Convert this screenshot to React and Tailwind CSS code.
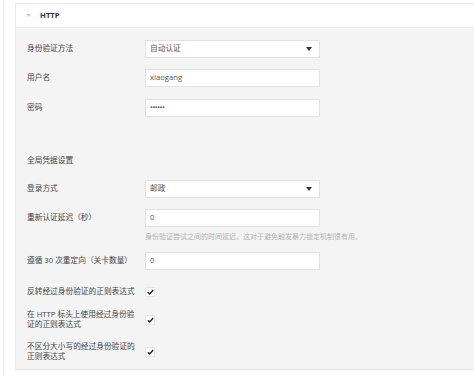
import React from 'react'

const font = { fontFamily: '"Open Sans", "Noto Sans CJK SC", sans-serif' }

function Caret() {
  return (
    <svg width="6" height="4" viewBox="0 0 6 4" className="shrink-0">
      <path d="M0 0 L6 0 L3 4 Z" fill="#333" />
    </svg>
  )
}

function Select({ value }) {
  return (
    <div className="flex h-[18px] w-[175px] items-center justify-between border border-[#e2e2e2] bg-white pl-[4px] pr-[7px] text-[7.7px] text-[#555]">
      <span>{value}</span>
      <Caret />
    </div>
  )
}

function Input({ value }) {
  return (
    <div className="flex h-[18px] w-[175px] items-center border border-[#e2e2e2] bg-white pl-[4px] text-[7.7px] text-[#555]">
      {value}
    </div>
  )
}

function Check() {
  return (
    <div className="flex h-[10px] w-[10px] items-center justify-center border border-[#e6e6e6] bg-white">
      <svg width="7" height="6" viewBox="0 0 7 6">
        <path d="M0.8 3.2 L2.6 4.9 L6.2 1" fill="none" stroke="#222" strokeWidth="1.4" />
      </svg>
    </div>
  )
}

function Row({ label, children, className = '' }) {
  return (
    <div className={`flex items-center ${className}`}>
      <div className="w-[118px] shrink-0 text-[7.7px] leading-[9.5px] text-[#444]">{label}</div>
      {children}
    </div>
  )
}

export default function App() {
  return (
    <div className="flex h-[380px] w-[474px] overflow-hidden bg-white" style={font}>
      <div className="h-[376px] w-[4px] shrink-0 border-r border-[#ececec]" />
      <div className="ml-[11px] mt-[3px] flex-1">
        <div className="border border-r-0 border-[#e8e8e8]">
          <div className="flex h-[24px] items-center border-b border-[#ededed] bg-white pl-[10px]">
            <svg width="5" height="3" viewBox="0 0 5 3">
              <path d="M0 0 L5 0 L2.5 3 Z" fill="#c8c8c8" />
            </svg>
            <span className="ml-[9px] text-[7.7px] font-bold text-[#333]">HTTP</span>
          </div>
          <div className="bg-[#f4f4f4] pb-[8px] pl-[11px] pt-[12px]">
            <Row label="身份验证方法">
              <Select value="自动认证" />
            </Row>
            <Row label="用户名" className="mt-[11px]">
              <Input value="xiaogang" />
            </Row>
            <Row label="密码" className="mt-[12px]">
              <Input value={<span className="tracking-[-0.5px]">••••••</span>} />
            </Row>
            <div className="mt-[38px] h-[10px] text-[7.7px] leading-[10px] text-[#444]">全局凭据设置</div>
            <Row label="登录方式" className="mt-[15px]">
              <Select value="邮政" />
            </Row>
            <Row label="重新认证延迟（秒）" className="mt-[11px]">
              <Input value="0" />
            </Row>
            <div className="ml-[118px] mt-[5px] h-[9px] text-[7px] leading-[9px] text-[#b3b3b3]">
              身份验证尝试之间的时间延迟。这对于避免触发暴力锁定机制很有用。
            </div>
            <Row label="遵循 30 次重定向（关卡数量）" className="mt-[11px]">
              <Input value="0" />
            </Row>
            <Row label="反转经过身份验证的正则表达式" className="mt-[17px]">
              <Check />
            </Row>
            <Row
              label={
                <>
                  在 HTTP 标头上使用经过身份验
                  <br />
                  证的正则表达式
                </>
              }
              className="mt-[13px]"
            >
              <Check />
            </Row>
            <Row
              label={
                <>
                  不区分大小写的经过身份验证的
                  <br />
                  正则表达式
                </>
              }
              className="mt-[13px]"
            >
              <Check />
            </Row>
          </div>
        </div>
      </div>
    </div>
  )
}
